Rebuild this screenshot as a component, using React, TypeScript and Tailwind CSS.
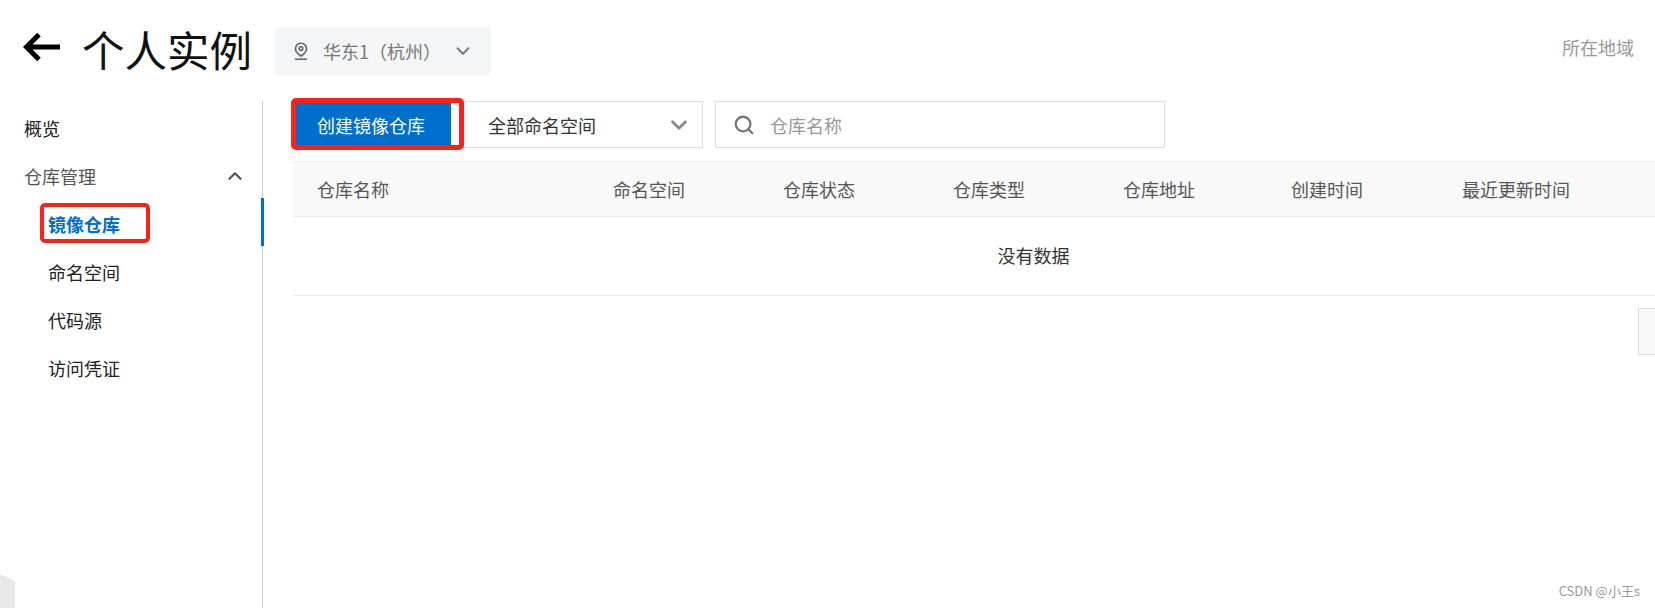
import React from "react";
import { ChevronDown, ChevronUp, Search } from "lucide-react";

const font = "font-['Noto_Sans_CJK_SC','Liberation_Sans',sans-serif]";

const columns = ["仓库名称", "命名空间", "仓库状态", "仓库类型", "仓库地址", "创建时间", "最近更新时间"];

const subMenu = [
  { label: "镜像仓库", active: true },
  { label: "命名空间" },
  { label: "代码源" },
  { label: "访问凭证" },
];

function Sidebar() {
  return (
    <aside className="w-[263px] shrink-0 border-r border-[#cccccc] pt-[3px] text-[18px]">
      <div className="flex h-12 items-center pl-[24px] text-[#222]">概览</div>
      <div className="flex h-12 items-center justify-between pl-[24px] pr-[16px] text-[#555]">
        <span>仓库管理</span>
        <ChevronUp className="h-[22px] w-[22px]" strokeWidth={2.5} />
      </div>
      {subMenu.map((item) => (
        <div
          key={item.label}
          className={
            item.active
              ? "relative flex h-12 items-center pl-[48px] font-bold text-[#006ecc]"
              : "flex h-12 items-center pl-[48px] text-[#222]"
          }
        >
          {item.label}
          {item.active && (
            <>
              <span className="absolute right-[-2px] top-[-2px] h-12 w-[3px] bg-[#006ecc]" />
              <span className="absolute left-[40px] top-[3px] h-[40px] w-[110px] rounded-[5px] border-4 border-[#ff2016]" />
            </>
          )}
        </div>
      ))}
    </aside>
  );
}

function Toolbar() {
  return (
    <div className="flex h-[47px] items-stretch text-[18px]">
      <div className="relative flex w-[166px] shrink-0">
        <button className="flex w-[158px] items-center bg-[#006ecc] pl-[24px] pt-[1px] text-white">创建镜像仓库</button>
        <span className="absolute left-[-2px] top-[-3px] h-[52px] w-[173px] rounded-[5px] border-[5px] border-[#ff2016]" />
      </div>
      <div className="flex w-[244px] items-center justify-between border border-l-0 border-[#dddddd] pl-[29px] pr-[10px] pt-[1px] text-[#333]">
        <span>全部命名空间</span>
        <ChevronDown className="h-[26px] w-[26px] text-[#888]" strokeWidth={2.5} />
      </div>
      <div className="ml-3 flex w-[450px] items-center border border-[#dddddd] pl-[17px] pt-[1px] text-[#999]">
        <Search className="h-[22px] w-[22px] text-[#777]" strokeWidth={2.5} />
        <span className="ml-[15px]">仓库名称</span>
      </div>
    </div>
  );
}

function RepoTable() {
  return (
    <div className="mt-[13px] text-[18px]">
      <div className="grid h-14 grid-cols-[296px_170px_170px_170px_168px_171px_1fr] items-center border-y border-[#e8e8e8] bg-[#f9f9f9] pl-[24px] text-[#555]">
        {columns.map((c) => (
          <span key={c}>{c}</span>
        ))}
      </div>
      <div className="flex h-[79px] items-center justify-center border-b border-[#e8e8e8] pb-[2px] pl-[119px] text-[#333]">
        <span>没有数据</span>
      </div>
    </div>
  );
}

export default function App() {
  return (
    <div className={`relative flex h-[608px] w-full flex-col overflow-hidden bg-white ${font}`}>
      <header className="flex h-[101px] shrink-0 pl-[23px] pt-[27px]">
        <svg width="37" height="30" viewBox="0 0 37 30" className="mt-[5px] shrink-0" fill="none" stroke="#000" strokeWidth="5">
          <path d="M37 15H4M16 2.5 3.5 15 16 27.5" />
        </svg>
        <h1 className="ml-[22px] mt-[-8px] h-[60px] text-[42.5px] leading-[60px] text-[#111]">个人实例</h1>
        <div className="ml-[23px] flex h-12 w-[216px] items-center rounded-[3px] bg-[#f4f5f7] pl-[19px] text-[18px] text-[#777]">
          <svg width="14" height="18" viewBox="0 0 14 18" fill="none" stroke="#666" strokeWidth="1.6" className="shrink-0">
            <path d="M7 1.2a5.6 5.6 0 0 1 5.6 5.6C12.6 10 9.5 12.4 7 14 4.5 12.4 1.4 10 1.4 6.8A5.6 5.6 0 0 1 7 1.2Z" />
            <circle cx="7" cy="6.6" r="1.8" />
            <path d="M1 17.2h12" />
          </svg>
          <span className="ml-[15px]">华东1（杭州）</span>
          <ChevronDown className="ml-[11px] h-[22px] w-[22px]" strokeWidth={2} />
        </div>
        <span className="ml-auto mr-[21px] mt-[6px] text-[18px] leading-[28px] text-[#999]">所在地域</span>
      </header>
      <div className="flex min-h-0 flex-1">
        <Sidebar />
        <main className="min-w-0 flex-1 pl-[30px]">
          <Toolbar />
          <RepoTable />
        </main>
      </div>
      <div className="absolute right-0 top-[308px] h-[47px] w-[17px] border border-r-0 border-[#dddddd] bg-[#f9f9f9]" />
      <svg width="15" height="34" viewBox="0 0 15 34" className="absolute bottom-0 left-0">
        <path d="M0 0 15 7V34H0Z" fill="#e8e8e8" />
      </svg>
      <span className="absolute bottom-[10px] right-[15px] text-[13px] leading-[14px] text-[#999]">CSDN @小王s</span>
    </div>
  );
}
